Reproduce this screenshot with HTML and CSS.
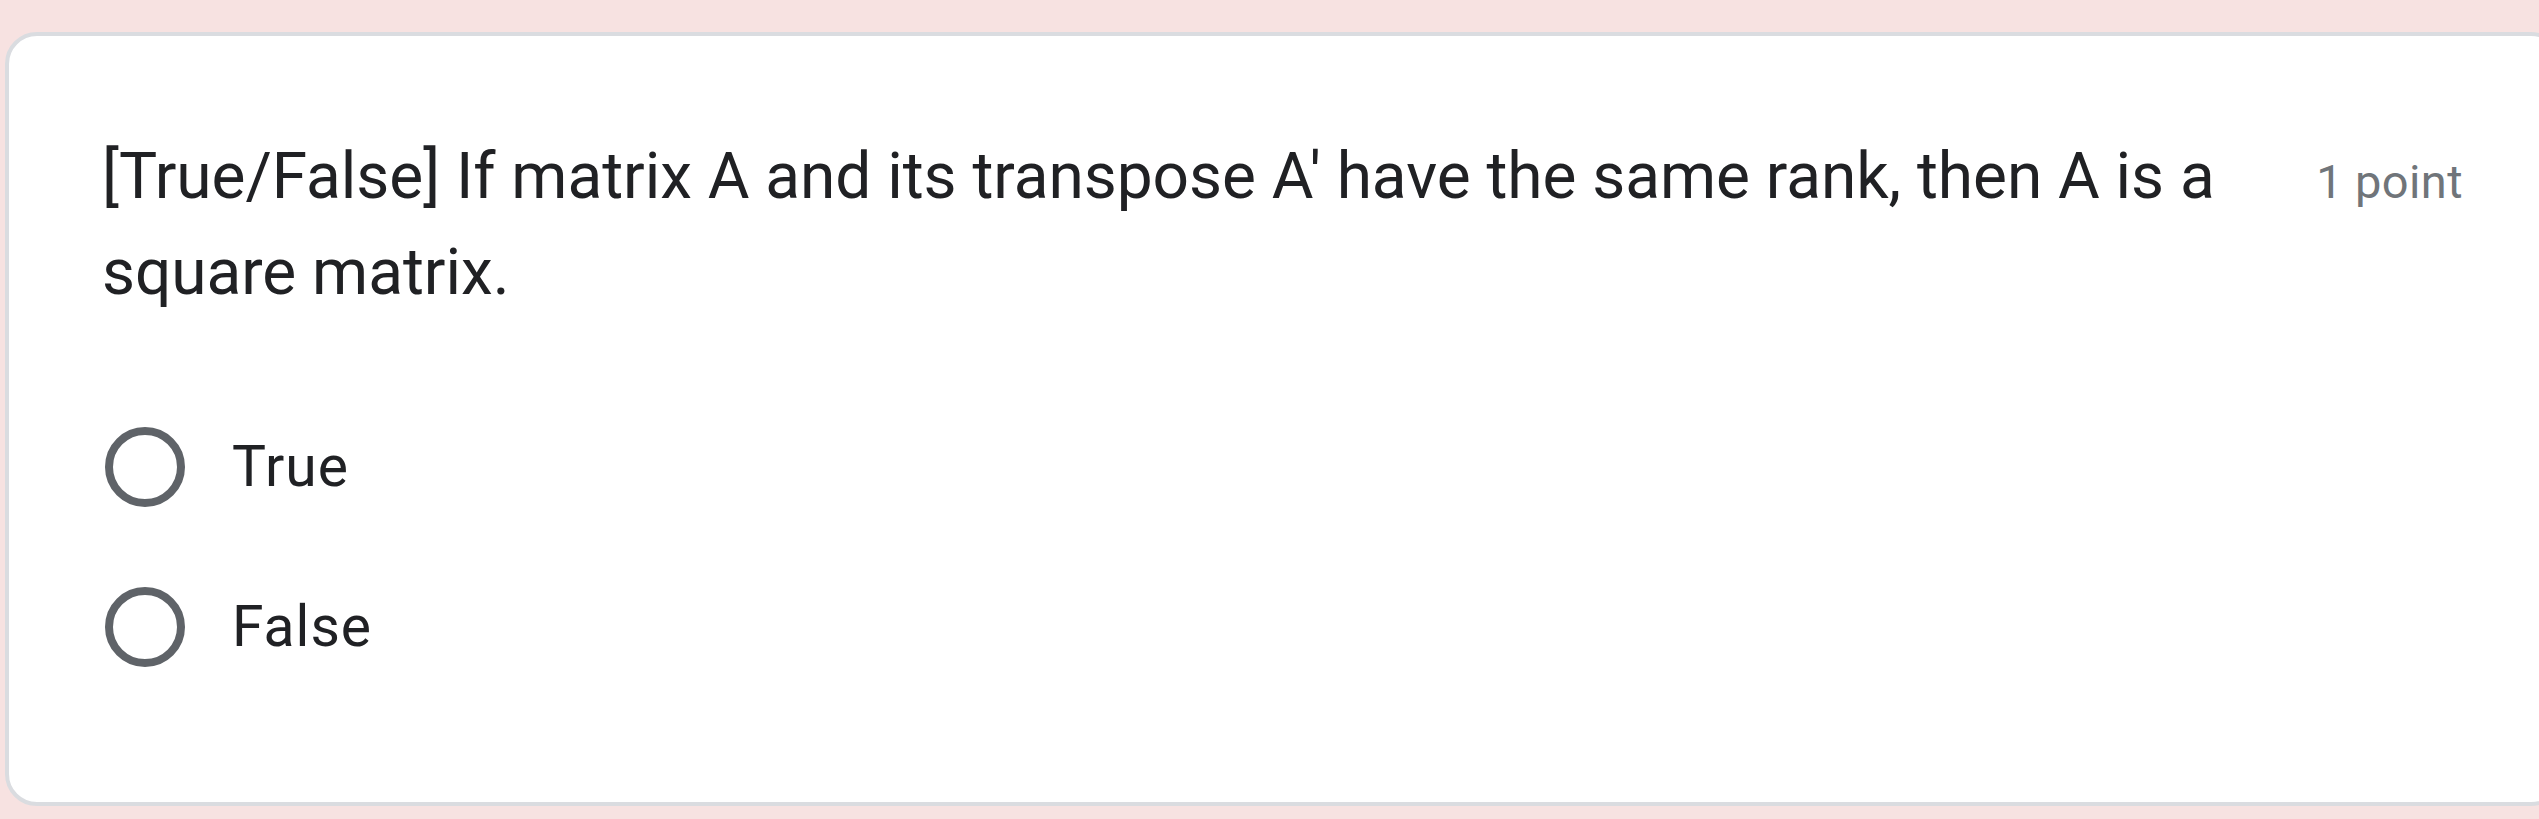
FILE: index.html
```html
<!DOCTYPE html>
<html lang="en">
<head>
<meta charset="utf-8">
<title>Question</title>
<link rel="stylesheet" href="styles.css">
</head>
<body>
<div class="page">
  <div class="card">
    <div class="question-head">
      <div class="question-title">[True/False] If matrix A and its transpose A' have the same rank, then A is a square matrix.</div>
      <div class="points">1 point</div>
    </div>
    <div class="options">
      <label class="option">
        <svg class="radio" viewBox="0 0 80 80" width="80" height="80" aria-hidden="true"><circle cx="40" cy="40" r="36" fill="none" stroke="#5f6368" stroke-width="8"/></svg>
        <span class="option-label">True</span>
      </label>
      <label class="option">
        <svg class="radio" viewBox="0 0 80 80" width="80" height="80" aria-hidden="true"><circle cx="40" cy="40" r="36" fill="none" stroke="#5f6368" stroke-width="8"/></svg>
        <span class="option-label">False</span>
      </label>
    </div>
  </div>
</div>
</body>
</html>
```

FILE: styles.css
```css
html, body {
  margin: 0;
  padding: 0;
  background: #f7e2e1;
  overflow: hidden;
}

body {
  width: 2539px;
  height: 819px;
  font-family: Roboto, "Liberation Sans", Arial, sans-serif;
  color: #202124;
}

.page {
  padding: 32px 0 0 5px;
}

.card {
  box-sizing: border-box;
  width: 2558px;
  height: 774px;
  background: #ffffff;
  border: 4px solid #dadce0;
  border-radius: 32px;
  padding: 93px 96px 0 93px;
}

.question-head {
  display: flex;
  align-items: baseline;
  gap: 64px;
}

.question-title {
  flex: 1;
  font-size: 64px;
  line-height: 96px;
  letter-spacing: -0.05px;
}

.points {
  font-size: 47px;
  line-height: 96px;
  color: #70757a;
  white-space: nowrap;
  letter-spacing: 0.4px;
}

.options {
  margin-top: 66px;
  display: flex;
  flex-direction: column;
}

.option {
  display: flex;
  align-items: center;
  height: 160px;
  gap: 47px;
}

.radio {
  display: block;
  margin-left: 3px;
  flex: none;
}

.option-label {
  font-size: 57px;
  line-height: 80px;
  letter-spacing: 1px;
}
```
